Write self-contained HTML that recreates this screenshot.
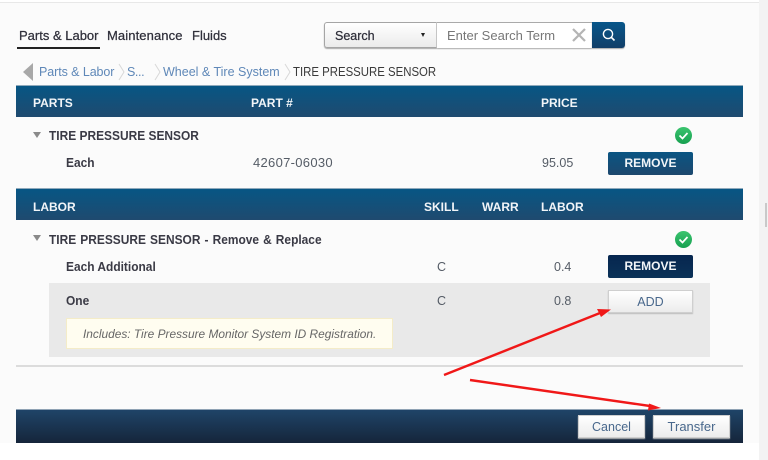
<!DOCTYPE html>
<html><head><meta charset="utf-8"><style>
html,body{margin:0;padding:0}
body{width:768px;height:460px;overflow:hidden;position:relative;background:#fff;font-family:"Liberation Sans",sans-serif}
#p *{position:absolute;white-space:nowrap}
.t{line-height:16px;height:16px;font-size:12.5px;color:#333}
.b{font-weight:bold;color:#3a3a45;font-size:12.5px;transform:scaleX(.955);transform-origin:0 0}
.m{color:#2f2f3a;-webkit-text-stroke:.25px #2f2f3a;font-size:13px}
.w{color:#f2f5f8;font-weight:bold;font-size:12px}
.l{color:#5f88b8}
.g{color:#555c66}
.bar{left:16px;width:727px;background:linear-gradient(#075684,#1f4a6f);border-top:1px solid #8fa9bb;box-sizing:border-box}
.rm{left:608px;width:85px;height:23px;border-radius:2px;color:#f2f5f8;font-weight:bold;font-size:12px;text-align:center;line-height:23px}
.wb{background:linear-gradient(#fff,#ececec);border:1px solid #cfcfcf;box-sizing:border-box;text-align:center;color:#49688c;font-size:12.5px;box-shadow:0 1px 1px #bbb}
.chk{left:675px;width:17px;height:17px;border-radius:50%;background:linear-gradient(#3bc46f,#16a050)}
.tri{width:0;height:0;border-left:4.5px solid transparent;border-right:4.5px solid transparent;border-top:6px solid #8a8a8a}
</style></head><body><div id="p" style="position:absolute;left:0;top:0;width:768px;height:460px">
<div style="left:0;top:0;width:768px;height:443px;background:#fbfbfb"></div>
<div style="left:0;top:0;width:768px;height:3px;background:#fff"></div>
<div style="left:0;top:2px;width:759px;height:1px;background:#e8e8e8"></div>
<div style="left:759px;top:0;width:9px;height:460px;background:#f3f3f3"></div>
<div style="left:765px;top:203px;width:2px;height:24px;background:#c9c9c9"></div>

<div class="t m" style="left:19px;top:28px">Parts &amp; Labor</div>
<div style="left:17px;top:47px;width:83px;height:1.5px;background:#222"></div>
<div class="t m" style="left:107px;top:28px;letter-spacing:.1px">Maintenance</div>
<div class="t m" style="left:192px;top:28px">Fluids</div>

<div style="left:324px;top:22px;width:113px;height:26px;box-sizing:border-box;border:1px solid #a5a5a5;border-right:1px solid #ccc;border-radius:3px 0 0 3px;background:linear-gradient(#fff,#ebebeb);box-shadow:0 1px 1px #aaa"></div>
<div class="t m" style="left:335px;top:28px;font-size:12.5px">Search</div>
<div style="left:421px;top:33px;width:0;height:0;border-left:2.5px solid transparent;border-right:2.5px solid transparent;border-top:4px solid #222"></div>
<div style="left:437px;top:22px;width:155px;height:26px;box-sizing:border-box;border-top:1px solid #aaa;background:#fff;box-shadow:0 1px 1px #aaa"></div>
<div class="t" style="left:447px;top:28px;color:#777;font-size:13px">Enter Search Term</div>
<svg style="left:571px;top:28px" width="16" height="15" viewBox="0 0 16 15"><path d="M2 1L14 13M14 1L2 13" stroke="#b4b4b4" stroke-width="2.2" fill="none"/></svg>
<div style="left:592px;top:22px;width:33px;height:26px;border-radius:0 3px 3px 0;background:linear-gradient(#07568a,#123f68);box-shadow:0 1px 1px #aaa"></div>
<svg style="left:600px;top:27px" width="18" height="16" viewBox="0 0 18 16"><circle cx="8" cy="7" r="4.6" stroke="#fff" stroke-width="1.4" fill="none"/><path d="M11.3 10.3L14.5 13.5" stroke="#fff" stroke-width="1.6"/></svg>

<svg style="left:22px;top:62px" width="12" height="19" viewBox="0 0 12 19"><path d="M11 1V19L1 10Z" fill="#a8a8a8"/></svg>
<div class="t l" style="left:39px;top:64px;letter-spacing:-.08px">Parts &amp; Labor</div>
<svg style="left:118px;top:63px" width="8" height="18" viewBox="0 0 8 18"><path d="M1 1L6 9L1 17" stroke="#d8d8d8" fill="none"/></svg>
<div class="t l" style="left:127px;top:64px;font-size:12.5px;letter-spacing:-.4px">S...</div>
<svg style="left:154px;top:63px" width="8" height="18" viewBox="0 0 8 18"><path d="M1 1L6 9L1 17" stroke="#d8d8d8" fill="none"/></svg>
<div class="t l" style="left:163px;top:64px">Wheel &amp; Tire System</div>
<svg style="left:284px;top:63px" width="8" height="18" viewBox="0 0 8 18"><path d="M1 1L6 9L1 17" stroke="#d8d8d8" fill="none"/></svg>
<div class="t" style="left:293px;top:64px;color:#3a3a3a;font-size:12.5px;transform:scaleX(.912);transform-origin:0 0">TIRE PRESSURE SENSOR</div>

<div class="bar" style="top:85px;height:32px"></div>
<div class="t w" style="left:33px;top:95px">PARTS</div>
<div class="t w" style="left:251px;top:95px">PART #</div>
<div class="t w" style="left:541px;top:95px">PRICE</div>

<div class="tri" style="left:33px;top:132px"></div>
<div class="t b" style="left:49px;top:128px">TIRE PRESSURE SENSOR</div>
<div class="chk" style="top:127px"></div>
<svg style="left:675px;top:127px" width="17" height="17" viewBox="0 0 17 17"><path d="M4.5 8.5L7.5 11.5L12.5 6" stroke="#fff" stroke-width="1.7" fill="none"/></svg>
<div class="t b" style="left:66px;top:155px">Each</div>
<div class="t g" style="left:253px;top:155px;font-size:13px;letter-spacing:.3px">42607-06030</div>
<div class="t g" style="left:542px;top:155px">95.05</div>
<div class="rm" style="top:152px;background:linear-gradient(#0a5583,#1d486e)">REMOVE</div>

<div class="bar" style="top:188px;height:32px"></div>
<div class="t w" style="left:33px;top:199px">LABOR</div>
<div class="t w" style="left:424px;top:199px">SKILL</div>
<div class="t w" style="left:482px;top:199px">WARR</div>
<div class="t w" style="left:541px;top:199px">LABOR</div>

<div class="tri" style="left:33px;top:235px"></div>
<div class="t b" style="left:49px;top:232px;word-spacing:.8px">TIRE PRESSURE SENSOR - Remove &amp; Replace</div>
<div class="chk" style="top:231px"></div>
<svg style="left:675px;top:231px" width="17" height="17" viewBox="0 0 17 17"><path d="M4.5 8.5L7.5 11.5L12.5 6" stroke="#fff" stroke-width="1.7" fill="none"/></svg>
<div class="t b" style="left:66px;top:259px">Each Additional</div>
<div class="t g" style="left:437px;top:259px">C</div>
<div class="t g" style="left:554px;top:259px">0.4</div>
<div class="rm" style="top:255px;background:linear-gradient(#06264f,#0b3258)">REMOVE</div>

<div style="left:49px;top:283px;width:661px;height:74px;background:#e9e9e9"></div>
<div class="t b" style="left:66px;top:293px">One</div>
<div class="t g" style="left:437px;top:293px">C</div>
<div class="t g" style="left:554px;top:293px">0.8</div>
<div class="wb" style="left:608px;top:290px;width:85px;height:23px;line-height:23px">ADD</div>
<div style="left:66px;top:318px;width:327px;height:31px;box-sizing:border-box;background:#fffdf0;border:1px solid #f4ecc8"></div>
<div class="t" style="left:83px;top:326px;font-style:italic;color:#666;font-size:11.9px">Includes: Tire Pressure Monitor System ID Registration.</div>

<div style="left:16px;top:365px;width:727px;height:2px;background:#dcdcdc"></div>

<div style="left:16px;top:409px;width:727px;height:34px;box-sizing:border-box;border-top:1px solid #8fa2b4;background:linear-gradient(#1f4468,#15253a)"></div>
<div class="wb" style="left:578px;top:415px;width:67px;height:23px;line-height:22px">Cancel</div>
<div class="wb" style="left:653px;top:415px;width:77px;height:23px;line-height:22px;font-size:13px">Transfer</div>

<svg style="left:0;top:0" width="768" height="460" viewBox="0 0 768 460">
<path d="M444 375L600 313" stroke="#f01818" stroke-width="2.4" fill="none"/>
<path d="M611 309.500L597 309L601 317Z" fill="#f01818"/>
<path d="M470 380L650 406" stroke="#f01818" stroke-width="2.4" fill="none"/>
<path d="M661 408L649 403.500L648 410.500Z" fill="#f01818"/>
</svg>
</div></body></html>
